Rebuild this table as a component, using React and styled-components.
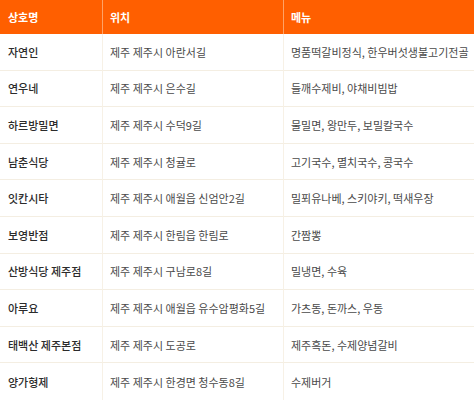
import styled, { createGlobalStyle } from 'styled-components';

const GlobalStyle = createGlobalStyle`
	html, body {
		margin: 0;
		padding: 0;
		background: #fff;
	}
	body {
		font-family: 'Noto Sans CJK KR', 'Noto Sans', sans-serif;
	}
`;

const rows = [
	['자연인', '제주 제주시 아란서길', '명품떡갈비정식, 한우버섯생불고기전골'],
	['연우네', '제주 제주시 은수길', '들깨수제비, 야채비빔밥'],
	['하르방밀면', '제주 제주시 수덕9길', '물밀면, 왕만두, 보밀칼국수'],
	['남춘식당', '제주 제주시 청귤로', '고기국수, 멸치국수, 콩국수'],
	['잇칸시타', '제주 제주시 애월읍 신엄안2길', '밀푀유나베, 스키야키, 떡새우장'],
	['보영반점', '제주 제주시 한림읍 한림로', '간짬뽕'],
	['산방식당 제주점', '제주 제주시 구남로8길', '밀냉면, 수육'],
	['아루요', '제주 제주시 애월읍 유수암평화5길', '가츠동, 돈까스, 우동'],
	['태백산 제주본점', '제주 제주시 도공로', '제주흑돈, 수제양념갈비'],
	['양가형제', '제주 제주시 한경면 청수동8길', '수제버거'],
];

const Table = styled.div`
	width: 474px;
	display: grid;
	grid-template-columns: 102px 181px 1fr;
`;

const HeadCell = styled.div`
	height: 34px;
	display: flex;
	align-items: center;
	padding-left: ${(props) => (props.first ? '8px' : '7px')};
	background: #ff5f00;
	color: #fff;
	font-size: 11px;
	font-weight: 700;
	border-left: ${(props) => (props.first ? 'none' : '1px solid #ffa266')};
`;

const Cell = styled.div`
	height: 36.6px;
	box-sizing: border-box;
	display: flex;
	align-items: center;
	padding-left: ${(props) => (props.first ? '8px' : '7px')};
	font-size: 11px;
	white-space: nowrap;
	overflow: hidden;
	color: ${(props) => (props.first ? '#2b2b2b' : '#4a4a4a')};
	font-weight: ${(props) => (props.first ? 500 : 400)};
	border-left: ${(props) => (props.first ? 'none' : '1px solid #f7f1e6')};
	border-bottom: ${(props) => (props.last ? 'none' : '1px solid #f4eee2')};
`;

const App = () => {
	return (
		<>
			<GlobalStyle />
			<Table>
				<HeadCell first>상호명</HeadCell>
				<HeadCell>위치</HeadCell>
				<HeadCell>메뉴</HeadCell>
				{rows.map((row, i) =>
					row.map((text, j) => (
						<Cell key={`${i}-${j}`} first={j === 0} last={i === rows.length - 1}>
							{text}
						</Cell>
					))
				)}
			</Table>
		</>
	);
};

export default App;
